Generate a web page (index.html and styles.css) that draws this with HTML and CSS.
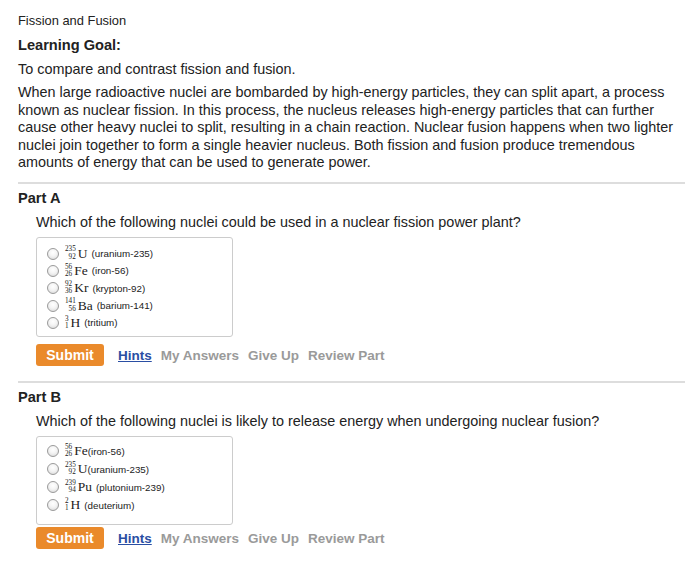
FILE: index.html
```html
<!DOCTYPE html>
<html>
<head>
<meta charset="utf-8">
<link rel="stylesheet" href="styles.css">
</head>
<body>
<div class="page">
  <div class="title">Fission and Fusion</div>
  <div class="goal-h">Learning Goal:</div>
  <p class="goal">To compare and contrast fission and fusion.</p>
  <p class="intro">When large radioactive nuclei are bombarded by high-energy particles, they can split apart, a process known as nuclear fission. In this process, the nucleus releases high-energy particles that can further cause other heavy nuclei to split, resulting in a chain reaction. Nuclear fusion happens when two lighter nuclei join together to form a single heavier nucleus. Both fission and fusion produce tremendous amounts of energy that can be used to generate power.</p>

  <section class="part">
    <h2 class="part-h">Part A</h2>
    <div class="part-body">
      <p class="q">Which of the following nuclei could be used in a nuclear fission power plant?</p>
      <div class="box">
        <div class="opt"><span class="radio"></span><span class="nuc"><span class="iso"><span>235</span><span>92</span></span>U</span><span class="nm">(uranium-235)</span></div>
        <div class="opt"><span class="radio"></span><span class="nuc"><span class="iso"><span>56</span><span>26</span></span>Fe</span><span class="nm">(iron-56)</span></div>
        <div class="opt"><span class="radio"></span><span class="nuc"><span class="iso"><span>92</span><span>36</span></span>Kr</span><span class="nm">(krypton-92)</span></div>
        <div class="opt"><span class="radio"></span><span class="nuc"><span class="iso"><span>141</span><span>56</span></span>Ba</span><span class="nm">(barium-141)</span></div>
        <div class="opt"><span class="radio"></span><span class="nuc"><span class="iso"><span>3</span><span>1</span></span>H</span><span class="nm">(tritium)</span></div>
      </div>
      <div class="actions">
        <span class="btn">Submit</span>
        <a class="hint">Hints</a>
        <span class="link">My Answers</span>
        <span class="link">Give Up</span>
        <span class="link">Review Part</span>
      </div>
    </div>
  </section>

  <section class="part">
    <h2 class="part-h">Part B</h2>
    <div class="part-body">
      <p class="q">Which of the following nuclei is likely to release energy when undergoing nuclear fusion?</p>
      <div class="box box-b">
        <div class="opt"><span class="radio"></span><span class="nuc"><span class="iso"><span>56</span><span>26</span></span>Fe</span><span class="nm tight">(iron-56)</span></div>
        <div class="opt"><span class="radio"></span><span class="nuc"><span class="iso"><span>235</span><span>92</span></span>U</span><span class="nm tight">(uranium-235)</span></div>
        <div class="opt"><span class="radio"></span><span class="nuc"><span class="iso"><span>239</span><span>94</span></span>Pu</span><span class="nm">(plutonium-239)</span></div>
        <div class="opt"><span class="radio"></span><span class="nuc"><span class="iso"><span>2</span><span>1</span></span>H</span><span class="nm">(deuterium)</span></div>
      </div>
      <div class="actions actions-b">
        <span class="btn">Submit</span>
        <a class="hint">Hints</a>
        <span class="link">My Answers</span>
        <span class="link">Give Up</span>
        <span class="link">Review Part</span>
      </div>
    </div>
  </section>
</div>
</body>
</html>
```

FILE: styles.css
```css
html, body {
  margin: 0;
  padding: 0;
  background: #fff;
}
body {
  font-family: "Liberation Sans", Arial, sans-serif;
  color: #222;
}
.page {
  padding: 13px 15px 0 18px;
}
.title {
  font-size: 12.9px;
  line-height: 16px;
}
.goal-h {
  font-size: 14.6px;
  font-weight: bold;
  margin-top: 7px;
  line-height: 18px;
}
.goal {
  font-size: 14.4px;
  margin: 6px 0 0;
  line-height: 18px;
}
.intro {
  font-size: 14.4px;
  line-height: 17.6px;
  margin: 6px 0 0;
  padding-bottom: 10px;
  border-bottom: 2px solid #ddd;
}
.part-h {
  font-size: 14.6px;
  font-weight: bold;
  margin: 5px 0 0;
  line-height: 18px;
}
.part-body {
  padding-left: 18px;
}
.q {
  font-size: 14.4px;
  margin: 6px 0 0;
  line-height: 18px;
}
.box {
  width: 197px;
  border: 1px solid #ccc;
  border-radius: 3px;
  margin-top: 6px;
  padding: 7px 0 5px 10px;
  box-sizing: border-box;
}
.opt {
  display: flex;
  align-items: center;
  height: 17.3px;
  font-size: 9.8px;
}
.radio {
  width: 12px;
  height: 12px;
  border-radius: 50%;
  border: 1px solid #9a9a9a;
  background: radial-gradient(circle at 50% 35%, #fff 0, #f4f4f4 45%, #d4d4d4 100%);
  box-sizing: border-box;
  margin-right: 6px;
  flex: none;
}
.nuc {
  font-family: "Liberation Serif", "Times New Roman", serif;
  font-size: 13.5px;
  display: inline-flex;
  align-items: center;
  color: #222;
}
.iso {
  display: inline-flex;
  flex-direction: column;
  align-items: flex-end;
  font-size: 7.2px;
  line-height: 7.2px;
  margin-right: 2px;
}
.nm {
  margin-left: 4px;
  color: #222;
}
.nm.tight {
  margin-left: 0;
}
.actions {
  display: flex;
  align-items: center;
  margin-top: 7px;
  font-size: 13.5px;
  font-weight: bold;
}
.btn {
  background: #ea8a2b;
  color: #fff;
  border-radius: 3px;
  width: 68px;
  height: 22px;
  line-height: 22px;
  font-size: 14px;
  text-align: center;
  margin-right: 14px;
}
.hint {
  color: #2a4ea3;
  text-decoration: underline;
  margin-right: 9px;
}
.link {
  color: #9a9a9a;
  margin-right: 9px;
}
.part + .part {
  border-top: 2px solid #ddd;
  margin-top: 15px;
}
.box-b {
  height: 89px;
  padding-top: 5px;
  padding-bottom: 10px;
}
.box-b .opt {
  height: 18px;
}
.actions-b {
  margin-top: 2px;
}
```
